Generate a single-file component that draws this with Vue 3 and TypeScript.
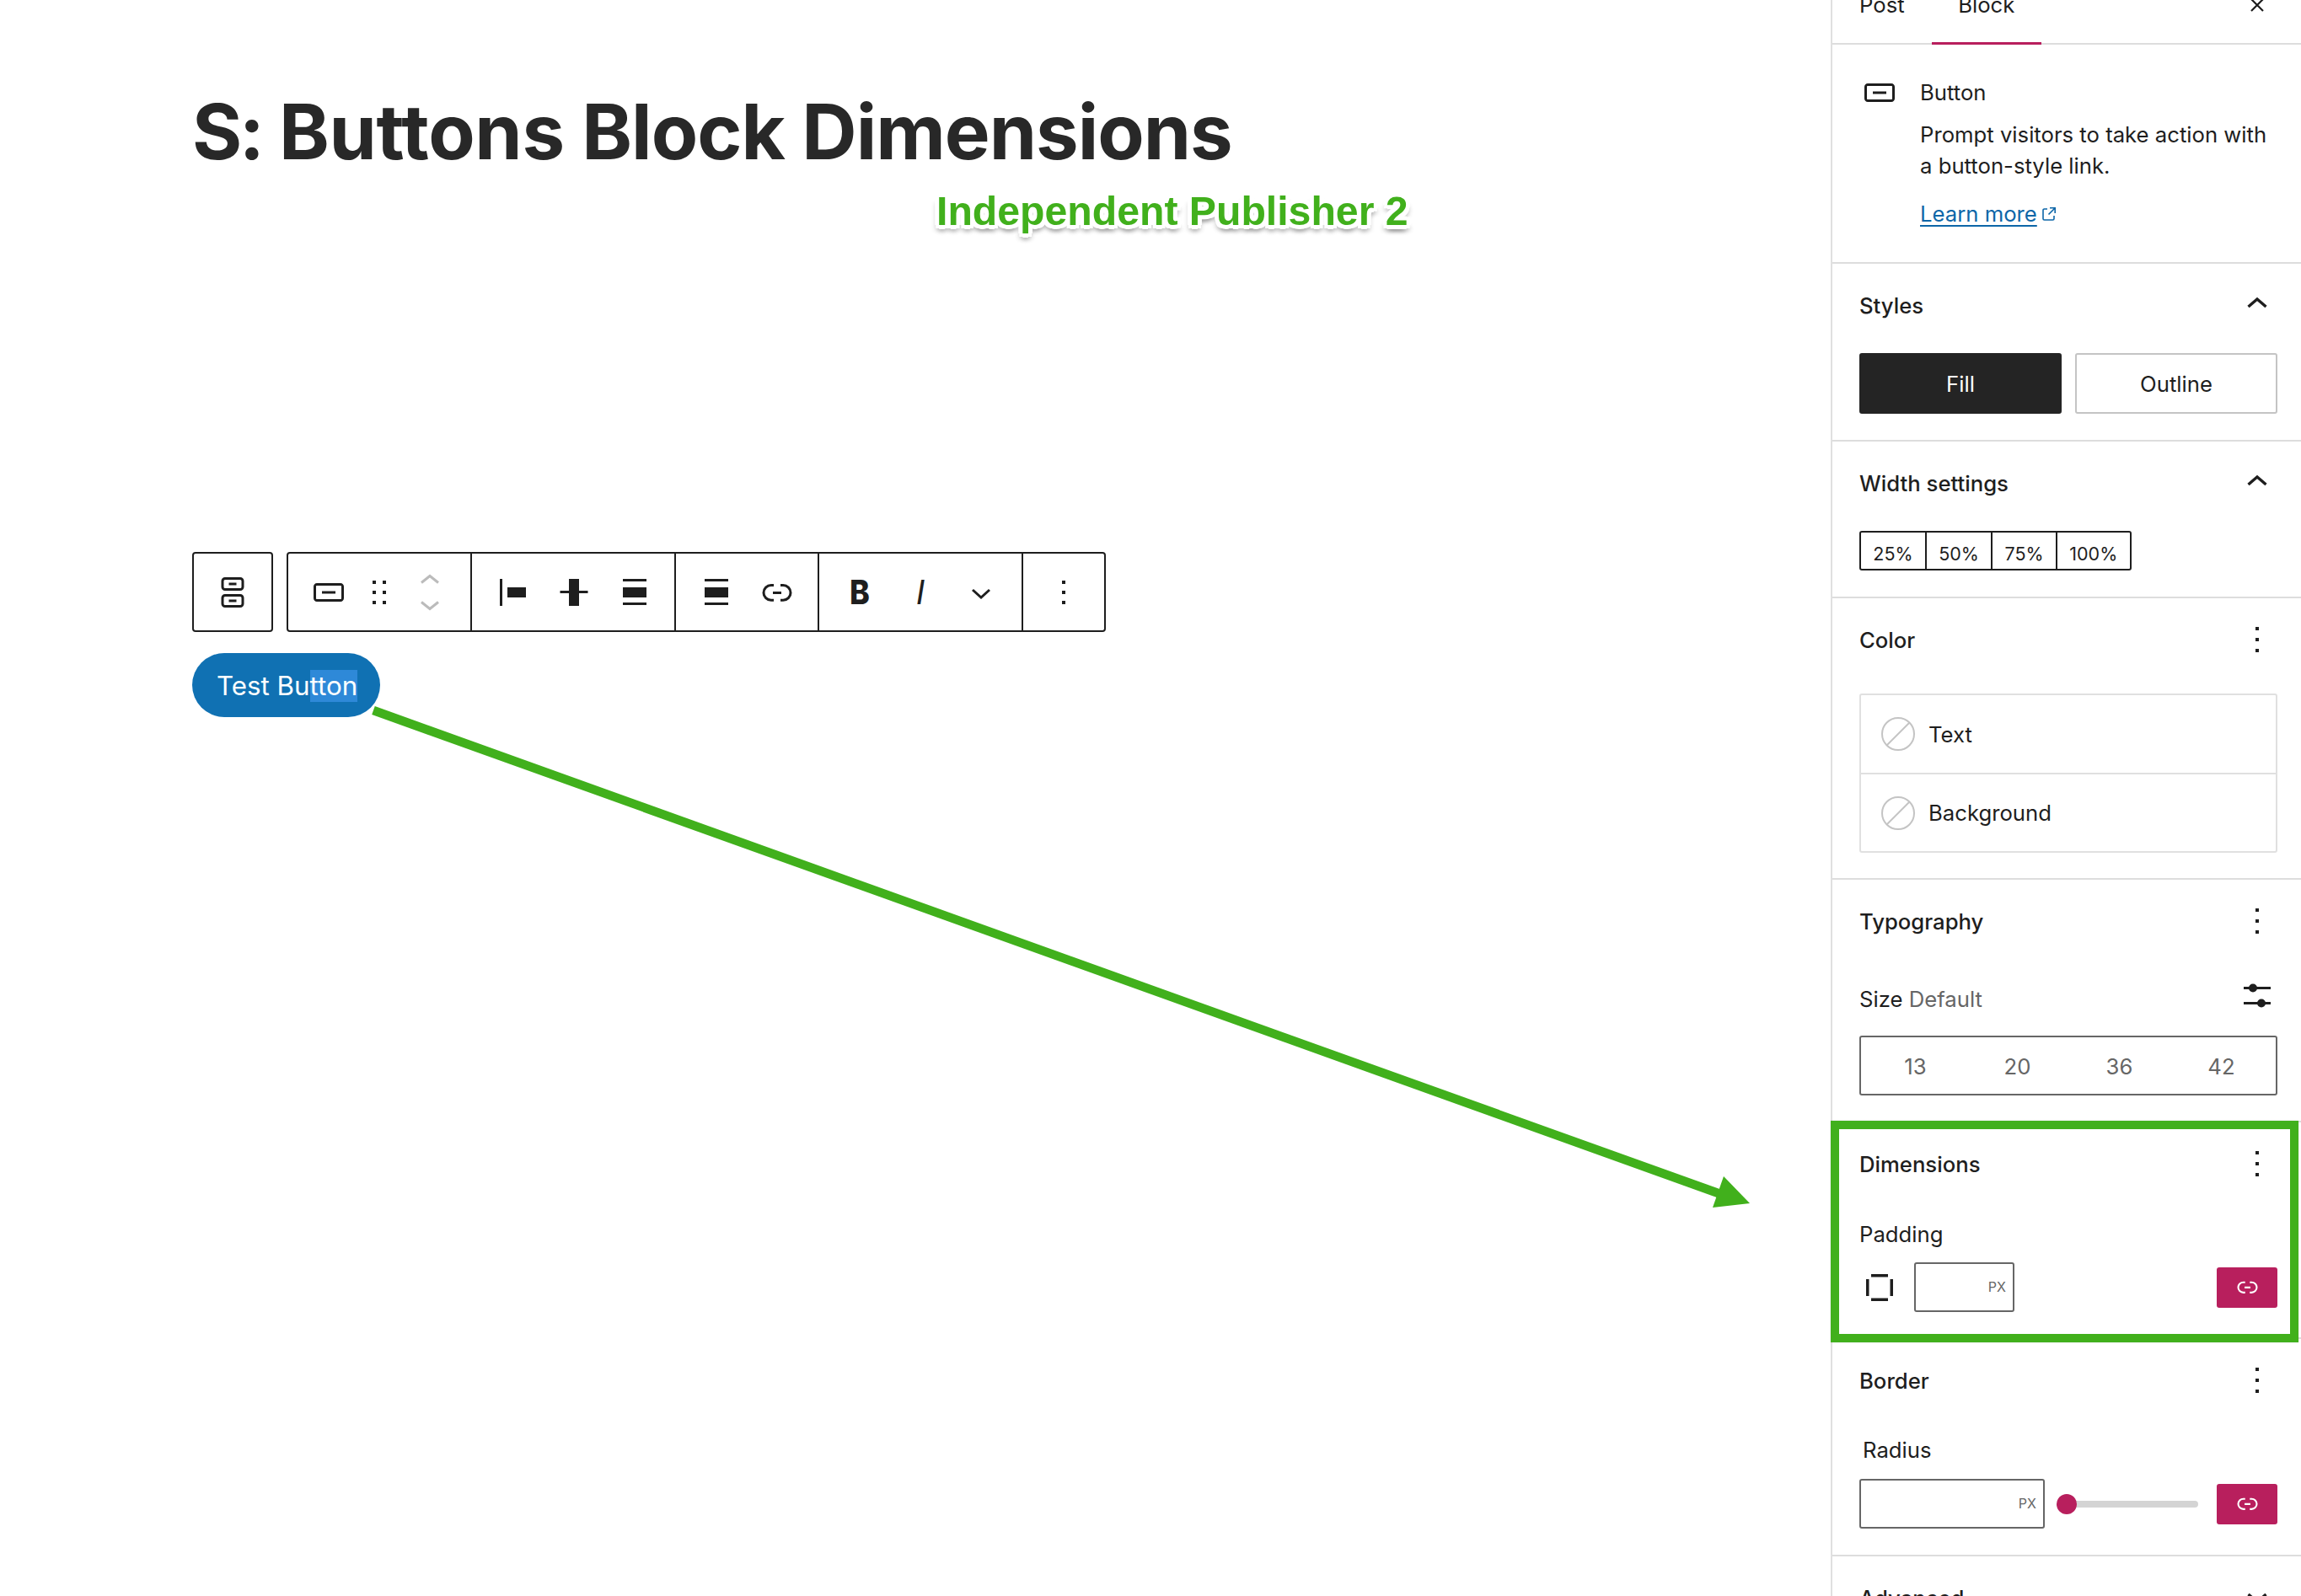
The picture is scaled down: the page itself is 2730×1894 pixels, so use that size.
<script setup lang="ts">
const widths: string[] = ['25%', '50%', '75%', '100%']
const sizes: string[] = ['13', '20', '36', '42']
const colors: string[] = ['Text', 'Background']
const buttonPath = 'M19 6.5H5c-1.1 0-2 .9-2 2v7c0 1.1.9 2 2 2h14c1.1 0 2-.9 2-2v-7c0-1.1-.9-2-2-2zm.5 9c0 .3-.2.5-.5.5H5c-.3 0-.5-.2-.5-.5v-7c0-.3.2-.5.5-.5h14c.3 0 .5.2.5.5v7zM8 12.8h8v-1.5H8v1.5z'
const linkPath = 'M10 17.389H8.444A5.194 5.194 0 1 1 8.444 7H10v1.5H8.444a3.694 3.694 0 0 0 0 7.389H10v1.5ZM14 7h1.556a5.194 5.194 0 0 1 0 10.39H14v-1.5h1.556a3.694 3.694 0 0 0 0-7.39H14V7Zm-4.5 6h5v-1.5h-5V13Z'
</script>

<template>
  <div class="page">
    <main class="editor">
      <h1 class="post-title"><span class="title-s">S:</span> <span class="title-b">Buttons</span> Block Dimensions</h1>

      <div class="toolbar-row">
        <div class="tool-box parent">
          <svg class="i48" viewBox="0 0 48 48" fill="none" stroke="currentColor" stroke-width="3">
            <rect x="12" y="7.5" width="24" height="13" rx="3" />
            <rect x="12" y="27.5" width="24" height="13" rx="3" />
            <path d="M19.5 14h9M19.5 34h9" />
          </svg>
        </div>
        <div class="tool-box main-bar">
          <div class="group g1">
            <span class="tb narrow"><svg class="i48" viewBox="0 0 24 24" fill="currentColor"><path :d="buttonPath" /></svg></span>
            <span class="tb narrow">
              <svg class="i48" viewBox="0 0 48 48" fill="currentColor">
                <rect x="16" y="10" width="4" height="4" /><rect x="28" y="10" width="4" height="4" />
                <rect x="16" y="22" width="4" height="4" /><rect x="28" y="22" width="4" height="4" />
                <rect x="16" y="34" width="4" height="4" /><rect x="28" y="34" width="4" height="4" />
              </svg>
            </span>
            <span class="tb narrow">
              <svg class="i48 muted" viewBox="0 0 48 48" fill="none" stroke="currentColor" stroke-width="3">
                <path d="M14 12.5 24 4.500l10 8M14 35.500l10 8 10-8" />
              </svg>
            </span>
          </div>
          <div class="group g2">
            <span class="tb"><svg class="i48" viewBox="0 0 48 48" fill="currentColor"><rect x="8" y="8" width="3" height="32" /><rect x="17" y="18" width="22" height="12" /></svg></span>
            <span class="tb"><svg class="i48" viewBox="0 0 48 48" fill="currentColor"><rect x="18" y="8" width="12" height="32" /><rect x="7.500" y="22" width="33" height="3" /></svg></span>
            <span class="tb"><svg class="i48" viewBox="0 0 48 48" fill="currentColor"><rect x="10" y="8" width="28" height="3" /><rect x="10" y="18" width="28" height="12" /><rect x="10" y="36" width="28" height="3" /></svg></span>
          </div>
          <div class="group g3">
            <span class="tb"><svg class="i48" viewBox="0 0 48 48" fill="currentColor"><rect x="10" y="8" width="28" height="3" /><rect x="10" y="18" width="28" height="12" /><rect x="10" y="36" width="28" height="3" /></svg></span>
            <span class="tb"><svg class="i48" viewBox="0 0 24 24" fill="currentColor"><path :d="linkPath" /></svg></span>
          </div>
          <div class="group g4">
            <span class="tb"><span class="fmt-b">B</span></span>
            <span class="tb"><span class="fmt-i">I</span></span>
            <span class="tb"><svg class="i48" viewBox="0 0 48 48" fill="none" stroke="currentColor" stroke-width="3"><path d="M14 21l10 9 10-9" /></svg></span>
          </div>
          <div class="group g5">
            <span class="tb">
              <svg class="i48" viewBox="0 0 48 48" fill="currentColor"><rect x="22" y="10" width="4" height="4" /><rect x="22" y="22" width="4" height="4" /><rect x="22" y="34" width="4" height="4" /></svg>
            </span>
          </div>
        </div>
      </div>

      <div class="wp-button"><span class="wp-label">Test Bu<span class="sel">tton</span></span></div>
    </main>

    <aside class="sidebar">
      <div class="tabs">
        <span class="tab">Post</span>
        <span class="tab active">Block</span>
        <svg class="close" viewBox="0 0 24 24" fill="none" stroke="currentColor" stroke-width="2.2"><path d="M5 -1 19 13M19 -1 5 13" /></svg>
      </div>

      <section class="block-info">
        <svg class="i48 info-icon" viewBox="0 0 24 24" fill="currentColor"><path :d="buttonPath" /></svg>
        <div class="info-text">
          <div class="info-title">Button</div>
          <p class="info-desc">Prompt visitors to take action with a button-style link.</p>
          <div class="info-link">
            <span class="underlined">Learn more</span>
            <svg class="ext" viewBox="0 0 18 18" fill="none" stroke="currentColor" stroke-width="1.6"><path d="M7 3H3.500A1.500 1.500 0 0 0 2 4.500v10A1.500 1.500 0 0 0 3.500 16h10a1.500 1.500 0 0 0 1.500-1.500V11M10 1.800h6.200V8M16 2l-7.500 7.500" /></svg>
          </div>
        </div>
      </section>

      <section class="panel">
        <div class="head"><span>Styles</span>
          <svg class="head-icon" viewBox="0 0 48 48" fill="none" stroke="currentColor" stroke-width="3.4"><path d="M13.500 26 24 17l10.500 9" /></svg>
        </div>
        <div class="styles">
          <div class="style-btn fill">Fill</div>
          <div class="style-btn">Outline</div>
        </div>
      </section>

      <section class="panel">
        <div class="head"><span>Width settings</span>
          <svg class="head-icon" viewBox="0 0 48 48" fill="none" stroke="currentColor" stroke-width="3.4"><path d="M13.500 26 24 17l10.500 9" /></svg>
        </div>
        <div class="widths">
          <span v-for="w in widths" :key="w" class="width-btn">{{ w }}</span>
        </div>
      </section>

      <section class="panel tight">
        <div class="head"><span>Color</span>
          <svg class="head-icon" viewBox="0 0 48 48" fill="currentColor"><rect x="22" y="9" width="4" height="4" /><rect x="22" y="22" width="4" height="4" /><rect x="22" y="35" width="4" height="4" /></svg>
        </div>
        <div class="color-box">
          <div v-for="c in colors" :key="c" class="color-row">
            <svg class="swatch" viewBox="0 0 40 40" fill="none" stroke="#c4c4c4" stroke-width="2"><ellipse cx="20" cy="20" rx="19" ry="19" /><path d="M6.500 33.500 33.500 6.500" /></svg>
            <span>{{ c }}</span>
          </div>
        </div>
      </section>

      <section class="panel tight">
        <div class="head"><span>Typography</span>
          <svg class="head-icon" viewBox="0 0 48 48" fill="currentColor"><rect x="22" y="9" width="4" height="4" /><rect x="22" y="22" width="4" height="4" /><rect x="22" y="35" width="4" height="4" /></svg>
        </div>
        <div class="size-row">
          <span>Size <span class="default">Default</span></span>
          <svg class="sliders" viewBox="0 0 48 48" fill="currentColor">
            <rect x="8" y="15" width="32" height="3" /><circle cx="19" cy="16.500" r="5" />
            <rect x="8" y="33" width="32" height="3" /><circle cx="29" cy="34.500" r="5" />
          </svg>
        </div>
        <div class="sizes">
          <span v-for="s in sizes" :key="s" class="size-cell">{{ s }}</span>
        </div>
      </section>

      <section class="panel tight">
        <div class="head"><span>Dimensions</span>
          <svg class="head-icon" viewBox="0 0 48 48" fill="currentColor"><rect x="22" y="9" width="4" height="4" /><rect x="22" y="22" width="4" height="4" /><rect x="22" y="35" width="4" height="4" /></svg>
        </div>
        <div class="field-label pad-label">Padding</div>
        <div class="padding-row">
          <svg class="sides" viewBox="0 0 32 32" fill="currentColor"><rect x="6" y="0" width="20" height="3.500" /><rect x="6" y="28.500" width="20" height="3.500" /><rect x="0" y="6" width="3.500" height="20" /><rect x="28.500" y="6" width="3.500" height="20" /></svg>
          <div class="unit-input pad-input"><span>PX</span></div>
          <div class="link-btn"><svg class="link-svg" viewBox="0 0 24 24" fill="currentColor"><path :d="linkPath" /></svg></div>
        </div>
      </section>

      <section class="panel">
        <div class="head"><span>Border</span>
          <svg class="head-icon" viewBox="0 0 48 48" fill="currentColor"><rect x="22" y="9" width="4" height="4" /><rect x="22" y="22" width="4" height="4" /><rect x="22" y="35" width="4" height="4" /></svg>
        </div>
        <div class="field-label radius-label">Radius</div>
        <div class="radius-row">
          <div class="unit-input radius-input"><span>PX</span></div>
          <div class="slider"><span class="thumb"></span></div>
          <div class="link-btn"><svg class="link-svg" viewBox="0 0 24 24" fill="currentColor"><path :d="linkPath" /></svg></div>
        </div>
      </section>

      <section class="panel last">
        <div class="head"><span>Advanced</span>
          <svg class="head-icon" viewBox="0 0 48 48" fill="none" stroke="currentColor" stroke-width="3.4"><path d="M13.500 20 24 29l10.500-9" /></svg>
        </div>
      </section>
    </aside>

    <!-- Annotation layer drawn over the screenshot -->
    <div class="note">Independent Publisher 2</div>
    <div class="callout"></div>
    <svg class="arrow" viewBox="0 0 2730 1894">
      <path d="M443 843 2044 1418" stroke="#41b01c" stroke-width="10.500" fill="none" />
      <path d="M2045 1396 2076 1428 2032 1433Z" fill="#41b01c" />
    </svg>
  </div>
</template>

<style>
html, body { margin: 0; background: #fff; }
</style>

<style scoped>
.page {
  position: relative;
  display: flex;
  width: 2730px;
  height: 1894px;
  overflow: hidden;
  background: #fff;
  color: #1e1e1e;
  font-family: Inter, "Liberation Sans", sans-serif;
  font-size: 25.700px;
  line-height: 37px;
}
.editor { flex: 1; min-width: 0; padding-left: 228px; }
.post-title {
  margin: 0;
  padding-top: 98px;
  font-size: 90.500px;
  line-height: 116px;
  font-weight: 700;
  letter-spacing: -1px;
  color: #282828;
  white-space: nowrap;
}
.title-s { letter-spacing: -3.500px; }
.title-b { letter-spacing: -.300px; }
.toolbar-row { display: flex; gap: 16px; margin-top: 441px; }
.tool-box {
  box-sizing: border-box;
  height: 95px;
  border: 2px solid #1e1e1e;
  border-radius: 4px;
  display: flex;
  align-items: center;
  background: #fff;
}
.parent { width: 96px; justify-content: center; }
.main-bar { width: 972px; }
.group {
  box-sizing: border-box;
  height: 100%;
  display: flex;
  align-items: center;
  padding: 0 12px;
  border-right: 2px solid #1e1e1e;
}
.g1 { padding: 0 18px; }
.g2 { padding: 0 11px 0 13px; }
.g5 { border-right: 0; }
.tb { width: 72px; height: 48px; display: flex; align-items: center; justify-content: center; }
.narrow { width: 60px; }
.i48 { width: 48px; height: 48px; display: block; flex: none; }
.muted { color: #bbb; }
.fmt-b { font-size: 39px; line-height: 48px; font-weight: 800; transform: scaleX(.92); }
.fmt-i { font-size: 39px; line-height: 48px; font-weight: 400; font-style: italic; }

.wp-button {
  display: inline-flex;
  align-items: center;
  box-sizing: border-box;
  height: 76px;
  margin-top: 25px;
  padding: 2px 27px 0 29px;
  border-radius: 38px;
  background: #1071b3;
  color: #fff;
  font-size: 31.300px;
  line-height: 38px;
}
.wp-label { white-space: nowrap; }
.sel { background: #2e89d8; }

.sidebar {
  box-sizing: border-box;
  flex: none;
  width: 558px;
  height: 100%;
  border-left: 2px solid #e0e0e0;
  background: #fff;
}
.tabs {
  box-sizing: border-box;
  height: 53px;
  display: flex;
  border-bottom: 2px solid #ddd;
  padding-right: 40px;
}
.tab { box-sizing: border-box; height: 53px; padding: 0 32px; line-height: 12px; }
.tab.active { padding: 0 31.500px; border-bottom: 3px solid #b81f5d; }
.close { width: 24px; height: 24px; margin-left: auto; overflow: visible; }

.block-info {
  box-sizing: border-box;
  height: 260px;
  display: flex;
  padding: 33px 0 0 32px;
  border-bottom: 2px solid #ddd;
}
.info-icon { margin: 0 24px 0 0; }
.info-text { padding-top: 5px; width: 424px; }
.info-title { line-height: 37px; }
.info-desc { margin: 13px 0 0; line-height: 37px; }
.info-link { display: flex; align-items: center; gap: 5px; margin-top: 20px; color: #0d66a8; }
.underlined { text-decoration: underline; text-underline-offset: 4px; text-decoration-thickness: 2px; }
.ext { width: 18px; height: 18px; }

.panel {
  box-sizing: border-box;
  padding: 29px 28px 31px 32px;
  border-bottom: 2px solid #ddd;
}
.panel.tight { padding-bottom: 30px; }
.panel.last { border-bottom: 0; padding-bottom: 0; }
.head {
  display: flex;
  justify-content: space-between;
  align-items: center;
  height: 40px;
  font-weight: 500;
}
.head-icon { width: 48px; height: 48px; flex: none; }

.styles { display: flex; gap: 16px; margin-top: 37px; }
.style-btn {
  box-sizing: border-box;
  width: 240px;
  height: 72px;
  display: flex;
  align-items: center;
  justify-content: center;
  border: 2px solid #c4c4c4;
  border-radius: 3px;
}
.style-btn.fill { background: #242424; border-color: #242424; color: #fff; }

.widths {
  display: inline-flex;
  box-sizing: border-box;
  height: 47px;
  margin-top: 37px;
  border: 2px solid #1e1e1e;
  border-radius: 3px;
  font-size: 21.500px;
  vertical-align: top;
}
.width-btn {
  box-sizing: border-box;
  display: block;
  height: 43px;
  padding: 7px 14.300px 0;
  line-height: 36px;
  border-left: 2px solid #1e1e1e;
}
.width-btn:first-child { border-left: 0; }

.color-box { margin-top: 44px; border: 2px solid #e0e0e0; border-radius: 3px; }
.color-row {
  box-sizing: border-box;
  height: 92px;
  display: flex;
  align-items: center;
  gap: 16px;
  padding-left: 24px;
}
.color-row + .color-row { height: 93px; border-top: 2px solid #e0e0e0; }
.swatch { width: 40px; height: 40px; flex: none; }

.size-row {
  display: flex;
  justify-content: space-between;
  align-items: flex-start;
  height: 40px;
  margin-top: 53px;
  line-height: 40px;
}
.default { color: #666; }
.sliders { width: 48px; height: 48px; margin: -10px 0 0 0; }
.sizes {
  box-sizing: border-box;
  display: flex;
  height: 71px;
  margin-top: 23px;
  padding: 0 4px;
  border: 2px solid #666;
  border-radius: 3px;
  color: #666;
  line-height: 69px;
}
.size-cell { flex: 1; text-align: center; }

.field-label { height: 40px; line-height: 40px; }
.pad-label { margin-top: 44px; }
.radius-label { margin-top: 43px; padding-left: 4px; }
.padding-row, .radius-row { display: flex; align-items: center; margin-top: 13px; }
.radius-row { margin-top: 14px; }
.sides { width: 32px; height: 32px; margin-left: 8px; flex: none; }
.unit-input {
  box-sizing: border-box;
  height: 59px;
  display: flex;
  align-items: center;
  justify-content: flex-end;
  padding-right: 8px;
  border: 2px solid #666;
  border-radius: 3px;
  font-size: 16px;
  color: #666;
  flex: none;
}
.pad-input { width: 119px; margin-left: 25px; }
.radius-input { width: 220px; }
.link-btn {
  box-sizing: border-box;
  width: 72px;
  height: 48px;
  margin-left: auto;
  display: flex;
  align-items: center;
  justify-content: center;
  border-radius: 3px;
  background: #b81f5d;
  color: #fff;
  flex: none;
}
.link-svg { width: 33px; height: 33px; }
.slider {
  position: relative;
  width: 168px;
  height: 8px;
  margin-left: 14px;
  border-radius: 4px;
  background: #d4d4d4;
}
.thumb {
  position: absolute;
  left: 0;
  top: -8px;
  width: 24px;
  height: 24px;
  border-radius: 50%;
  background: #b81f5d;
}

.note {
  position: absolute;
  left: 1111px;
  top: 220px;
  font-family: "Liberation Sans", Arial, sans-serif;
  font-size: 48.200px;
  line-height: 60px;
  font-weight: 700;
  color: #41b01c;
  white-space: nowrap;
  text-shadow:
    5px 0 0 #fff, -5px 0 0 #fff, 0 5px 0 #fff, 0 -5px 0 #fff,
    4px 4px 0 #fff, -4px 4px 0 #fff, 4px -4px 0 #fff, -4px -4px 0 #fff,
    0 8px 5px rgba(0, 0, 0, .28), 5px 7px 5px rgba(0, 0, 0, .14), -5px 7px 5px rgba(0, 0, 0, .14);
}
.callout {
  position: absolute;
  left: 2172px;
  top: 1330px;
  box-sizing: border-box;
  width: 555px;
  height: 263px;
  border: 10px solid #41b01c;
  box-shadow: 0 0 2px rgba(0, 0, 0, .15);
  pointer-events: none;
}
.arrow { position: absolute; left: 0; top: 0; width: 2730px; height: 1894px; pointer-events: none; }
</style>
